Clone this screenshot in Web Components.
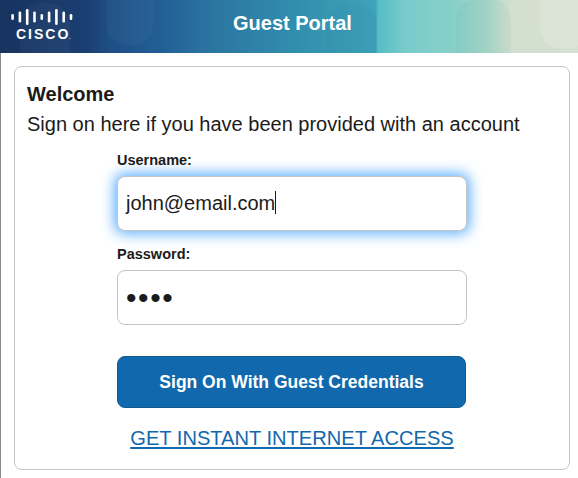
<!DOCTYPE html>
<html>
<head>
<meta charset="utf-8">
<title>Guest Portal</title>
<style>
    html, body { margin: 0; padding: 0; background: #fff; height: 100%; overflow: hidden; }
    body { font-family: "Liberation Sans", Arial, sans-serif; color: #1b1b1b; }
</style>
</head>
<body>
<portal-page>
    <portal-header slot="header">Guest Portal</portal-header>
    <login-card>
        <login-field label="Username:" value="john@email.com" focused></login-field>
        <login-field label="Password:" value="••••" password></login-field>
        <signon-button>Sign On With Guest Credentials</signon-button>
        <access-link>GET INSTANT INTERNET ACCESS</access-link>
    </login-card>
</portal-page>

<script>
class PortalPage extends HTMLElement {
    constructor() {
        super();
        this.attachShadow({ mode: 'open' });
        this.shadowRoot.innerHTML = `
        <style>
            :host {
                display: flex;
                flex-direction: column;
                height: 478px;
                box-sizing: border-box;
                border-left: 1px solid #8a8a8a;
            }
            .content {
                padding: 13px 8px 0 13px;
            }
        </style>
        <slot name="header"></slot>
        <div class="content"><slot></slot></div>`;
    }
}

class PortalHeader extends HTMLElement {
    constructor() {
        super();
        this.attachShadow({ mode: 'open' });
        const heights = [6, 11, 16, 11, 6, 11, 16, 11, 6];
        this.shadowRoot.innerHTML = `
        <style>
            :host {
                display: block;
                position: relative;
                height: 53px;
                margin-left: -1px;
                overflow: hidden;
                background: linear-gradient(90deg, #17335f 0%, #1b3f72 15%, #1e4f86 19%, #225f95 28%, #2a72a0 35%, #338fae 52%, #3fa3ba 65%, #56bcc6 65.4%, #79cbcc 70%, #88d0c8 79%, #a6d6c8 84%, #d3dfcf 88.4%, #d6e0d0 100%);
            }
            .shape {
                position: absolute;
                background: rgba(255, 255, 255, 0.03);
            }
            .s0 { left: 20px; top: 3px; width: 50px; height: 60px; border-radius: 22px 22px 0 0; }
            .s1 { left: 107px; top: -20px; width: 46px; height: 65px; border-radius: 0 0 20px 20px; }
            .s2 { left: 327px; top: 3px; width: 50px; height: 60px; border-radius: 22px 22px 0 0; background: rgba(20, 90, 130, 0.05); }
            .s4 { left: 456px; top: 0; width: 55px; height: 60px; border-radius: 20px 20px 0 0; background: rgba(60, 150, 140, 0.06); }
            .s5 { left: 540px; top: -10px; width: 50px; height: 58px; border-radius: 0 0 20px 20px; background: rgba(255, 255, 255, 0.14); }
            .logo {
                position: absolute;
                left: 11px;
                top: 8px;
                width: 64px;
                color: #fff;
            }
            .logo svg { display: block; }
            .word {
                display: block;
                margin: 4px 0 0 5px;
                font: bold 14px/11px "Liberation Sans", Arial, sans-serif;
                letter-spacing: 2px;
                white-space: nowrap;
            }
            .tm {
                font-size: 5px;
                letter-spacing: 0;
                margin-left: -1px;
            }
            .title {
                position: relative;
                display: block;
                padding-top: 12px;
                padding-left: 233px;
                font: bold 20px/23px "Liberation Sans", Arial, sans-serif;
                color: #fff;
            }
        </style>
        <div class="shape s0"></div>
        <div class="shape s1"></div>
        <div class="shape s2"></div>
        <div class="shape s4"></div>
        <div class="shape s5"></div>
        <div class="logo">
            <svg width="64" height="17" viewBox="0 0 64 17" fill="#fff">
                ${heights.map((h, i) => `<rect x="${0.3 + i * 7.3}" y="${(16 - h) / 2 + 1}" width="2.6" height="${h}" rx="1.3"/>`).join('')}
            </svg>
            <span class="word">CISCO<span class="tm">.</span></span>
        </div>
        <span class="title"><slot></slot></span>`;
    }
}

class LoginCard extends HTMLElement {
    constructor() {
        super();
        this.attachShadow({ mode: 'open' });
        this.shadowRoot.innerHTML = `
        <style>
            :host {
                display: block;
                box-sizing: border-box;
                height: 404px;
                border: 1px solid #c4c4c4;
                border-radius: 8px;
                padding: 16px 12px 0 12px;
            }
            h1 {
                margin: 0;
                font: bold 20px/23px "Liberation Sans", Arial, sans-serif;
                color: #1b1b1b;
            }
            p {
                margin: 6px 0 0;
                font: 20px/24px "Liberation Sans", Arial, sans-serif;
                color: #1b1b1b;
            }
            .form {
                width: 350px;
                margin: 16px 0 0 90px;
                display: flex;
                flex-direction: column;
            }
        </style>
        <h1>Welcome</h1>
        <p>Sign on here if you have been provided with an account</p>
        <div class="form"><slot></slot></div>`;
    }
}

class LoginField extends HTMLElement {
    constructor() {
        super();
        this.attachShadow({ mode: 'open' });
    }

    connectedCallback() {
        const focused = this.hasAttribute('focused');
        const password = this.hasAttribute('password');
        this.shadowRoot.innerHTML = `
        <style>
            :host {
                display: block;
                margin-bottom: 15px;
            }
            label {
                display: block;
                height: 24px;
                font: bold 14.5px/16px "Liberation Sans", Arial, sans-serif;
                color: #1b1b1b;
            }
            .box {
                box-sizing: border-box;
                height: 55px;
                display: flex;
                align-items: center;
                padding: 0 8px;
                background: #fff;
                border: 1px solid #c4c4c4;
                border-radius: 8px;
                font: 20px/24px "Liberation Sans", Arial, sans-serif;
                color: #1b1b1b;
            }
            .focused {
                padding-bottom: 2px;
                box-shadow: 0 0 13px 3px rgba(70, 165, 250, 0.85);
            }
            .caret {
                display: inline-block;
                width: 1px;
                height: 23px;
                background: #1b1b1b;
            }
            .dots { letter-spacing: 1.6px; font-size: 30px; }
        </style>
        <label>${this.getAttribute('label')}</label>
        <div class="box ${focused ? 'focused' : ''}">
            <span class="${password ? 'dots' : ''}">${this.getAttribute('value')}</span>
            ${focused ? '<span class="caret"></span>' : ''}
        </div>`;
    }
}

class SignonButton extends HTMLElement {
    constructor() {
        super();
        this.attachShadow({ mode: 'open' });
        this.shadowRoot.innerHTML = `
        <style>
            :host {
                display: block;
                margin-top: 16px;
            }
            .btn {
                box-sizing: border-box;
                width: 349px;
                height: 52px;
                display: flex;
                align-items: center;
                justify-content: center;
                background: #1268ac;
                border: 1px solid #0f5b8f;
                border-radius: 8px;
                color: #fff;
                font: bold 17.5px/20px "Liberation Sans", Arial, sans-serif;
            }
        </style>
        <div class="btn"><slot></slot></div>`;
    }
}

class AccessLink extends HTMLElement {
    constructor() {
        super();
        this.attachShadow({ mode: 'open' });
        this.shadowRoot.innerHTML = `
        <style>
            :host {
                display: block;
                margin-top: 18px;
                text-align: center;
            }
            a {
                font: 20.1px/24px "Liberation Sans", Arial, sans-serif;
                color: #1268ac;
                text-decoration: underline;
            }
        </style>
        <a href="#"><slot></slot></a>`;
    }
}

customElements.define('portal-page', PortalPage);
customElements.define('portal-header', PortalHeader);
customElements.define('login-card', LoginCard);
customElements.define('login-field', LoginField);
customElements.define('signon-button', SignonButton);
customElements.define('access-link', AccessLink);
</script>
</body>
</html>
